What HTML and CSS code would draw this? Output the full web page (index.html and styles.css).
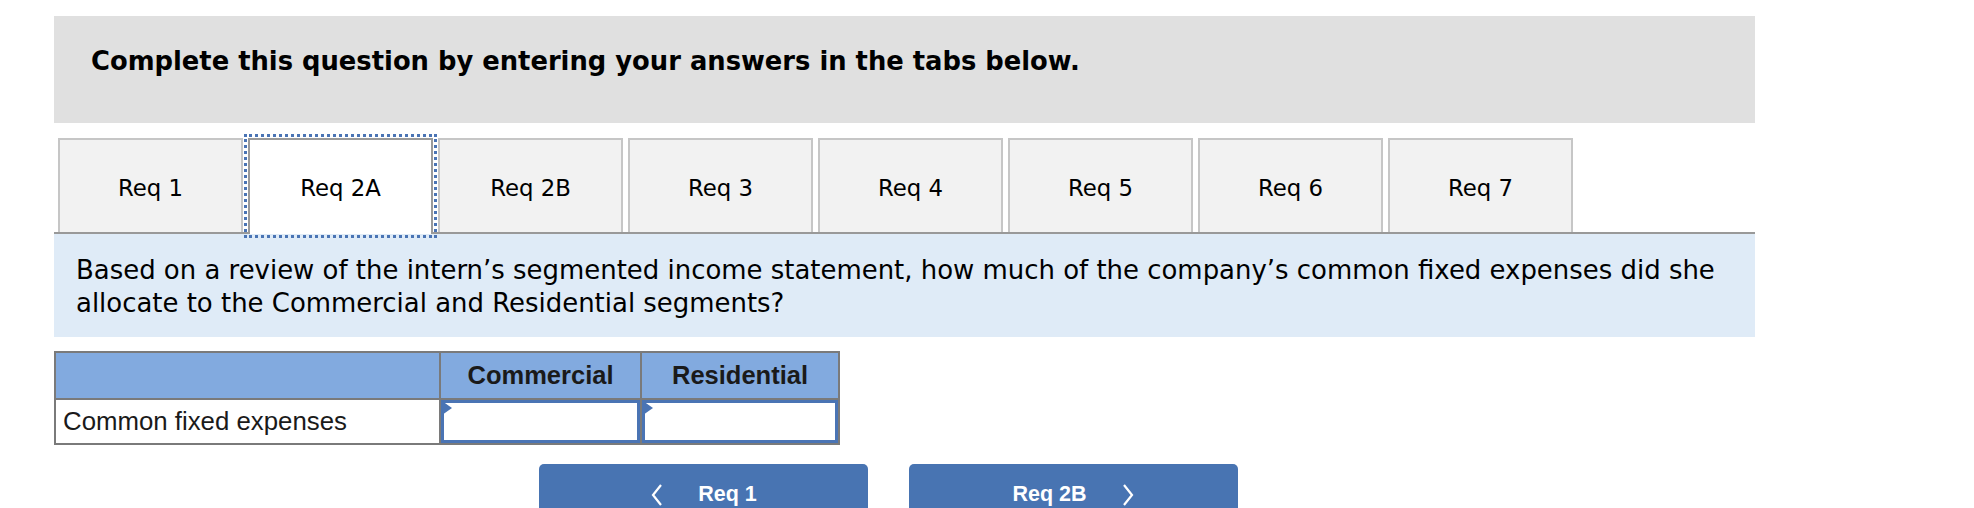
FILE: index.html
```html
<!DOCTYPE html>
<html>
<head>
<meta charset="utf-8">
<link rel="stylesheet" href="styles.css">
</head>
<body>
<div class="page">
  <div class="instructions">
    <h1 class="title">Complete this question by entering your answers in the tabs below.</h1>
  </div>

  <div class="tabbar">
    <div class="tab">Req 1</div>
    <div class="tab active">Req 2A</div>
    <div class="tab">Req 2B</div>
    <div class="tab">Req 3</div>
    <div class="tab">Req 4</div>
    <div class="tab">Req 5</div>
    <div class="tab">Req 6</div>
    <div class="tab">Req 7</div>
  </div>

  <div class="question">
    <p>Based on a review of the intern’s segmented income statement, how much of the company’s common fixed expenses did she allocate to the Commercial and Residential segments?</p>
  </div>

  <table class="answer">
    <tr class="head">
      <th class="label-col"></th>
      <th class="val-col">Commercial</th>
      <th class="val-col2">Residential</th>
    </tr>
    <tr class="row">
      <td class="label">Common fixed expenses</td>
      <td class="cell"><div class="input"></div></td>
      <td class="cell"><div class="input"></div></td>
    </tr>
  </table>

  <div class="nav">
    <div class="navbtn">
      <svg class="chev" width="14" height="24" viewBox="0 0 14 24"><polyline points="11,2 3,12 11,22" fill="none" stroke="#fff" stroke-width="2.2"/></svg>
      <span>Req 1</span>
    </div>
    <div class="navbtn">
      <span>Req 2B</span>
      <svg class="chev" width="14" height="24" viewBox="0 0 14 24"><polyline points="3,2 11,12 3,22" fill="none" stroke="#fff" stroke-width="2.2"/></svg>
    </div>
  </div>
</div>
</body>
</html>
```

FILE: styles.css
```css
html, body {
  margin: 0;
  padding: 0;
  background: #ffffff;
}

.page {
  width: 1701px;
  margin-left: 54px;
  padding-top: 16px;
  font-family: "DejaVu Sans", Verdana, sans-serif;
  color: #000;
}

.instructions {
  background: #e0e0e0;
  height: 107px;
  box-sizing: border-box;
  padding: 30px 0 0 37px;
}

.title {
  margin: 0;
  font-size: 25.8px;
  line-height: 30px;
  font-weight: bold;
  letter-spacing: 0;
}

.tabbar {
  margin-top: 15px;
  display: flex;
  gap: 5px;
  padding-left: 4px;
  border-bottom: 2px solid #999999;
  height: 94px;
}

.tab {
  width: 185px;
  height: 94px;
  box-sizing: border-box;
  border: 2px solid #c6c6c6;
  border-bottom: none;
  background: #f2f2f2;
  display: flex;
  align-items: center;
  justify-content: center;
  font-size: 22.8px;
  padding-top: 4px;
}

.tab.active {
  background: #ffffff;
  border-color: #9a9a9a;
  outline: 3px dotted #4a74b4;
  outline-offset: 1px;
  height: 96px;
  padding-bottom: 2px;
  border-bottom: none;
  position: relative;
}

.question {
  background: #dfebf7;
  height: 103px;
  box-sizing: border-box;
  padding: 20px 22px 0 22px;
}

.question p {
  margin: 0;
  font-size: 25.95px;
  line-height: 32.5px;
}

.answer {
  margin-top: 14px;
  border-collapse: collapse;
  font-family: "Liberation Sans", Arial, sans-serif;
  font-size: 25.5px;
}

.answer th, .answer td {
  border: 2px solid #7a7a7a;
  padding: 0;
}

.head th {
  background: #82aadf;
  height: 45px;
  font-weight: bold;
  color: #1a1a1a;
  text-align: center;
}

.label-col { width: 383px; }
.val-col { width: 199px; }
.val-col2 { width: 196px; }

.row td {
  height: 43px;
}

.label {
  text-align: left;
  padding-left: 7px !important;
  color: #1a1a1a;
  font-size: 25.8px;
}

.cell {
  background: #fff;
  vertical-align: top;
}

.input {
  position: relative;
  height: 43px;
  box-sizing: border-box;
  border: 3px solid #4a74b4;
  background: #fff;
}

.input::before {
  content: "";
  position: absolute;
  left: -2px;
  top: -2px;
  width: 0;
  height: 0;
  border-left: 10px solid #4a74b4;
  border-top: 7px solid transparent;
  border-bottom: 7px solid transparent;
}

.nav {
  margin-top: 19px;
  margin-left: 485px;
  display: flex;
  gap: 41px;
}

.navbtn {
  width: 329px;
  height: 60px;
  box-sizing: border-box;
  background: #4874b2;
  border-radius: 5px 5px 0 0;
  display: flex;
  justify-content: center;
  align-items: flex-start;
  gap: 34px;
  padding-top: 18px;
  color: #fff;
  font-family: "Liberation Sans", Arial, sans-serif;
  font-weight: bold;
  font-size: 21.5px;
  line-height: 24px;
}

.chev {
  display: block;
  margin-top: 1px;
}
```
